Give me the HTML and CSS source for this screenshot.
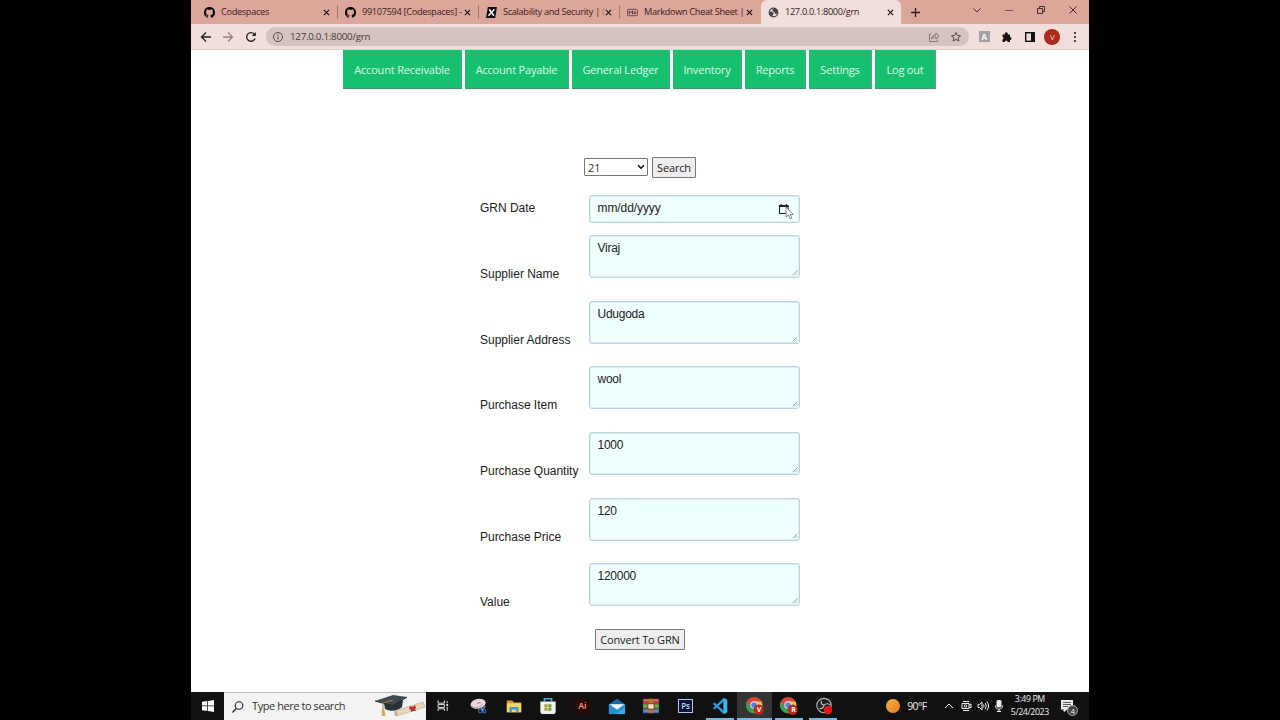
FILE: index.html
```html
<!DOCTYPE html>
<html lang="en">
<head>
<meta charset="utf-8">
<title>GRN</title>
<link rel="stylesheet" href="styles.css">
</head>
<body>
<svg class="defs" width="0" height="0">
  <symbol id="github" viewBox="0 0 16 16"><path d="M8 0a8 8 0 0 0-2.53 15.59c.4.07.55-.17.55-.38v-1.5c-2.23.48-2.7-.95-2.7-.95-.36-.93-.89-1.18-.89-1.18-.73-.5.05-.49.05-.49.8.06 1.23.83 1.23.83.72 1.22 1.87.87 2.33.66.07-.52.28-.87.51-1.07-1.78-.2-3.64-.89-3.64-3.95 0-.87.31-1.59.82-2.15-.08-.2-.36-1.02.08-2.12 0 0 .67-.21 2.2.82a7.6 7.6 0 0 1 4 0c1.53-1.04 2.2-.82 2.2-.82.44 1.1.16 1.92.08 2.12.51.56.82 1.27.82 2.15 0 3.07-1.87 3.75-3.65 3.95.29.25.54.73.54 1.48v2.2c0 .21.15.46.55.38A8 8 0 0 0 8 0z"/></symbol>
  <symbol id="x" viewBox="0 0 8 8"><path d="M1 1l6 6M7 1L1 7" fill="none" stroke="currentColor" stroke-width="1.3"/></symbol>
  <symbol id="chrome" viewBox="0 0 20 20"><circle cx="9" cy="9" r="9" fill="#d94436"/><path d="M1.2 4.5A9 9 0 0 0 9 18l4-6.8L5 11z" fill="#32a350"/><path d="M17.3 5H9l4 6.500L9 18A9 9 0 0 0 17.300 5z" fill="#f5c431"/><circle cx="9" cy="9" r="4.200" fill="#eef"/><circle cx="9" cy="9" r="3.200" fill="#4a86e8"/><circle cx="14" cy="14" r="5.700" fill="#b92a1c"/></symbol>
</svg>
<div class="desktop">
  <header class="tabs">
    <div class="tab"><svg class="fav"><use href="#github"/></svg><span class="title">Codespaces</span><svg class="close"><use href="#x"/></svg></div>
    <div class="tab"><svg class="fav"><use href="#github"/></svg><span class="title">99107594 [Codespaces] -</span><svg class="close"><use href="#x"/></svg></div>
    <div class="tab"><svg class="fav" viewBox="0 0 12 12"><path d="M2 0h10l-2 12H0z" fill="#111"/><path d="M3.500 2.500l5 7M9.200 2.500l-6.500 7" stroke="#fff" stroke-width="1.600"/></svg><span class="title">Scalability and Security | <i>(</i></span><svg class="close"><use href="#x"/></svg></div>
    <div class="tab last"><svg class="fav" viewBox="0 0 12 12"><rect x=".5" y="2.500" width="11" height="7" rx="1" fill="none" stroke="#634540"/><path d="M2.500 8V4.300L4.200 6 6 4.300V8M8.700 4v3.500M7.300 6.200l1.400 1.500 1.500-1.500" fill="none" stroke="#423"/></svg><span class="title">Markdown Cheat Sheet |</span><svg class="close"><use href="#x"/></svg></div>
    <div class="tab active"><svg class="fav globe" viewBox="0 0 12 12"><circle cx="6" cy="6" r="4.700" fill="#eddcd8" stroke="#444" stroke-width="1.300"/><path d="M1.500 5l3 .3 2 1.500-1 1.500-1 2.500-2.500-2zM5 1.500h3.500L10.500 4v3L8 7.500 7 5.500 5 4.500z" fill="#444"/></svg><span class="title">127.0.0.1:8000/grn</span><svg class="close"><use href="#x"/></svg></div>
    <svg class="plus" viewBox="0 0 10 10"><path d="M5 1v8M1 5h8"/></svg>
    <div class="winctl">
      <svg viewBox="0 0 10 10"><path d="M1.500 3.500L5 7l3.500-3.500"/></svg>
      <svg viewBox="0 0 10 10"><path d="M1 5.500h8" opacity=".7"/></svg>
      <svg viewBox="0 0 10 10"><path d="M1.500 3.500h5v5h-5zM3.500 3.500v-2h5v5h-2"/></svg>
      <svg viewBox="0 0 10 10"><path d="M1.500 1.500l7 7M8.500 1.500l-7 7"/></svg>
    </div>
  </header>
  <div class="toolbar">
    <div class="navbtns">
      <svg viewBox="0 0 12 12"><path d="M11 6H2M6 1.500L1.500 6 6 10.500"/></svg>
      <svg class="dim" viewBox="0 0 12 12"><path d="M1 6h9M6 1.500L10.500 6 6 10.500"/></svg>
      <svg viewBox="0 0 12 12"><path d="M10 7.500A4.300 4.300 0 1 1 9.300 3.200"/><path d="M10.800 1v4h-4z" fill="#222" stroke="none"/></svg>
    </div>
    <div class="url">
      <svg class="info" viewBox="0 0 12 12"><circle cx="6" cy="6" r="4.500"/><path d="M6 5.300v3M6 3.300v1.200"/></svg>
      <span class="address">127.0.0.1:8000/grn</span>
      <svg class="share" viewBox="0 0 12 12"><path d="M3 3H1.500v7.500h8V8.500M3.500 8c.3-3 2-4 4.500-4V2l3 3-3 3V6C6 6 4.500 6.500 3.500 8z"/></svg>
      <svg class="star" viewBox="0 0 12 12"><path d="M6 1.500l1.300 3 3.300.3-2.500 2.100.8 3.200L6 8.400l-2.900 1.700.8-3.200L1.400 4.800l3.300-.3z"/></svg>
    </div>
    <div class="exts">
      <span class="ext-a">A</span>
      <svg viewBox="0 0 12 12"><path d="M1.500 3.500h2.300a1.600 1.600 0 1 1 3 0H9v2.400a1.500 1.500 0 1 1 0 3V11H6.700a1.500 1.500 0 0 0-3 0H1.500V8.500a1.400 1.400 0 0 0 0-2.700z" fill="#161211" stroke="none"/></svg>
      <svg viewBox="0 0 12 12"><rect x="1.700" y="1.700" width="8.600" height="8.600" stroke-width="1.400"/><path d="M7 1.500h3.500v9H7z" fill="#111" stroke="none"/></svg>
      <span class="avatar">V</span>
      <svg viewBox="0 0 12 12"><g fill="#222" stroke="none"><circle cx="6" cy="2" r="1.100"/><circle cx="6" cy="6" r="1.100"/><circle cx="6" cy="10" r="1.100"/></g></svg>
    </div>
  </div>
  <main class="page">
    <nav class="menu">
      <a>Account Receivable</a><a>Account Payable</a><a>General Ledger</a><a>Inventory</a><a>Reports</a><a>Settings</a><a>Log out</a>
    </nav>
    <div class="lookup">
      <div class="select"><span>21</span><svg viewBox="0 0 8 6"><path d="M1 1.200l3 3 3-3"/></svg></div>
      <div class="button search-btn">Search</div>
    </div>
    <div class="form">
      <div class="row date-row"><label>GRN Date</label><div class="field date"><span>mm/dd/yyyy</span>
        <svg class="cal" viewBox="0 0 12 12"><path d="M1.500 2.500h8.500v8H1.500z" fill="none" stroke="#222" stroke-width="1.100"/><path d="M1 2h9.500v2H1zM2.500 1h1.200v2H2.500zM7.800 1H9v2H7.800z" fill="#222"/></svg>
        <svg class="cursor" viewBox="0 0 10 14"><path d="M1 1v10l2.400-2 1.700 3.800 1.700-.8-1.700-3.500h3.200z" fill="#fff" stroke="#777" stroke-width=".9"/></svg></div></div>
      <div class="row"><label>Supplier Name</label><div class="field area">Viraj<svg class="grip" viewBox="0 0 8 8"><path d="M1 7l6-6M4.500 7L7 4.500"/></svg></div></div>
      <div class="row"><label>Supplier Address</label><div class="field area">Udugoda<svg class="grip" viewBox="0 0 8 8"><path d="M1 7l6-6M4.500 7L7 4.500"/></svg></div></div>
      <div class="row"><label>Purchase Item</label><div class="field area">wool<svg class="grip" viewBox="0 0 8 8"><path d="M1 7l6-6M4.500 7L7 4.500"/></svg></div></div>
      <div class="row"><label>Purchase Quantity</label><div class="field area">1000<svg class="grip" viewBox="0 0 8 8"><path d="M1 7l6-6M4.500 7L7 4.500"/></svg></div></div>
      <div class="row"><label>Purchase Price</label><div class="field area">120<svg class="grip" viewBox="0 0 8 8"><path d="M1 7l6-6M4.500 7L7 4.500"/></svg></div></div>
      <div class="row"><label>Value</label><div class="field area">120000<svg class="grip" viewBox="0 0 8 8"><path d="M1 7l6-6M4.500 7L7 4.500"/></svg></div></div>
    </div>
    <div class="button convert">Convert To GRN</div>
  </main>
  <footer class="taskbar">
    <div class="start"><svg width="12" height="12" viewBox="0 0 12 12"><path d="M0 1.700L5.300 1v4.600H0zM6 .9L12 0v5.600H6zM0 6.300h5.300v4.600L0 10.200zM6 6.300h6V12l-6-.9z" fill="#fff"/></svg></div>
    <div class="search">
      <svg width="14" height="14" viewBox="0 0 14 14"><circle cx="8" cy="5.500" r="3.800" fill="none" stroke="#222" stroke-width="1.100"/><path d="M5.300 8.300L1.500 12.500" stroke="#222" stroke-width="1.200"/></svg>
      <span>Type here to search</span>
      <svg class="cap" width="52" height="25" viewBox="0 0 52 25"><path d="M10 9l1 6c6 3 13 2 17-2l1-7z" fill="#29313a"/><path d="M1 7L19 1l14 2-14 8z" fill="#414a53"/><path d="M1 7l18 5 14-9" fill="none" stroke="#222931"/><path d="M19 6L9 9v8" fill="none" stroke="#a68432"/><path d="M7.500 16h3l1 6H8z" fill="#d5ad48"/><path d="M21 17L49 8l2 5-29 9z" fill="#e5d8bd" stroke="#c0ab89" stroke-width=".7"/><ellipse cx="22" cy="19.500" rx="1.500" ry="2.500" fill="#c5ad87"/><path d="M36 12l3 1 2-2 1 3-1 1 1 2-3 0-2 1 0-2-2-1z" fill="#bb2f36"/></svg>
    </div>
    <div class="apps">
      <div class="app view"><svg viewBox="0 0 20 20"><path d="M3 2v4h9V2M3 17v-3h9v3M3 8h9v4H3zM16 3v3M16 11v6" fill="none" stroke="#e8e8e8" stroke-width="1.400"/><circle cx="16" cy="8.500" r="1.500" fill="#fff"/></svg></div>
      <div class="app"><svg viewBox="0 0 20 20"><ellipse cx="9" cy="7.500" rx="8.500" ry="5.500" fill="#ead8df" transform="rotate(-12 9 7.500)"/><path d="M2 10c3 3 8 2 12-2" fill="none" stroke="#b98f9e"/><path d="M8 7l4-1" stroke="#c06a75"/><path d="M11 10l4 6M17 10l-4 5" stroke="#9bb6d5" stroke-width="1.300"/><circle cx="11.500" cy="15.500" r="2" fill="none" stroke="#3970b4" stroke-width="1.300"/><circle cx="16" cy="16" r="1.700" fill="none" stroke="#3970b4" stroke-width="1.300"/></svg></div>
      <div class="app"><svg viewBox="0 0 20 20"><path d="M2 4h6l2 2h8v11H2z" fill="#d99b2e"/><path d="M2 7h16v10H2z" fill="#f6d36b"/><path d="M5 11h10v6h-2.500v-3h-5v3H5z" fill="#3f9bce"/></svg></div>
      <div class="app"><svg viewBox="0 0 20 20"><path d="M6 5V2h8v3" fill="none" stroke="#49a8d6" stroke-width="1.800"/><path d="M1.500 5h17v11q0 3-3 3H4.500q-3 0-3-3z" fill="#eef2ea"/><path d="M6 8h3.500v3.300H6zM6 12h3.500v3.300H6z" fill="#ad9c35"/><path d="M10.300 8h3.500v3.300h-3.500zM10.300 12h3.500v3.300h-3.500z" fill="#67a342"/></svg></div>
      <div class="app"><span class="ai">Ai</span></div>
      <div class="app"><svg viewBox="0 0 20 20"><path d="M1 8l9-6 9 6z" fill="#176da8"/><path d="M1 8h18v11H1z" fill="#38a9e4"/><path d="M2 8h16l-8 6z" fill="#f0f7fb"/><path d="M1 8l9 7 9-7v3L9 19H1z" fill="#2590d2"/></svg></div>
      <div class="app"><svg viewBox="0 0 20 20"><path d="M1 2h18v5H1z" fill="#b63c50"/><path d="M1 7h18v6H1z" fill="#4f9838"/><path d="M1 13h18v5H1z" fill="#3b6db3"/><path d="M2 3.500h16M2 15.500h16M2 10h16" stroke="#d4ad62" stroke-width="1"/><path d="M7.500 2h5v16h-5z" fill="#bd752e"/><path d="M6.500 7.500h7v6h-7z" fill="#f2e3be" stroke="#752c24"/></svg></div>
      <div class="app"><span class="ps">Ps</span></div>
      <div class="app open vs"><svg viewBox="0 0 20 20"><path d="M14 1l4 2v14l-4 2L2 7.500 4 6l10 9V5L4 14l-2-1.500z" fill="#2b9bdc"/><path d="M14 1l4 2v14l-4 2z" fill="#46b4ec"/></svg></div>
      <div class="app open current"><svg viewBox="0 0 20 20"><use href="#chrome"/></svg><b>V</b></div>
      <div class="app open"><svg viewBox="0 0 20 20"><use href="#chrome"/></svg><b>R</b></div>
      <div class="app open"><svg viewBox="0 0 20 20"><circle cx="10" cy="9.500" r="8" fill="#1d1d1f" stroke="#bbb" stroke-width="1.200"/><path d="M10 9q-4-1-3-5M10 9q4-3 7 0M10 9q0 4-5 4" fill="none" stroke="#bbb" stroke-width="1.300"/><circle cx="14.500" cy="14.500" r="4.700" fill="#e9131b"/></svg></div>
    </div>
    <div class="tray">
      <span class="sun"></span><span class="temp">90°F</span>
      <svg class="up" viewBox="0 0 10 10"><path d="M1 7l4-4 4 4"/></svg>
      <svg class="cam" viewBox="0 0 12 12"><path d="M3 1.500h6M3 10.500h6M2 3.500h7v5H2zM9 5l2-1v4L9 7"/><circle cx="5.500" cy="6" r="1.300"/></svg>
      <svg class="vol" viewBox="0 0 12 12"><path d="M1 4.500h1.500L5 2v8L2.500 7.500H1zM6.500 4.500q1.200 1.500 0 3M8.200 3q2.300 3 0 6M10 1.700q3.200 4.300 0 8.600"/></svg>
      <svg class="mic" viewBox="0 0 12 12"><rect x="3.500" y="0" width="5" height="7.500" rx="1.500" fill="#eee" stroke="none"/><path d="M2.500 5.500c0 5 7 5 7 0M6 9v2.500M4 11.500h4"/></svg>
      <div class="clock"><span>3:49 PM</span><span>5/24/2023</span></div>
      <div class="note"><svg viewBox="0 0 12 12"><path d="M0 0h12v9H6l-3 2.500V9H0z" fill="#eee"/><path d="M2 2.500h8M2 4.500h8M2 6.500h5" stroke="#333" stroke-width=".8"/></svg><span>4</span></div>
    </div>
  </footer>
</div>
</body>
</html>
```
FILE: styles.css
```css
* { box-sizing: border-box; }
body { margin: 0; background: #000; font-family: "Open Sans", "Noto Sans", sans-serif; overflow: hidden; }
svg { display: block; flex: none; }
.defs { position: absolute; }
.desktop { width: 898px; height: 720px; margin-left: 191px; display: flex; flex-direction: column; background: #fff; }

.tabs { height: 24px; background: #dda69b; display: flex; padding-left: 6px; color: #38201e; }
.tab { width: 141px; height: 24px; display: flex; align-items: center; padding: 0 8px 0 7px; background: linear-gradient(#a97970, #a97970) right 5px / 1px 14px no-repeat; }
.tab.last { background: none; }
.tab.active { width: 140px; padding-right: 7px; background: #f2deda; border-radius: 6px 6px 0 0; }
.fav { width: 11px; height: 11px; margin-right: 6px; }
.title { flex: 1; font-size: 9.200px; letter-spacing: -.32px; white-space: nowrap; line-height: 14px; }
.title i { font-style: normal; opacity: .35; }
.close { width: 7px; height: 7px; color: #201010; }
.plus { width: 11px; height: 11px; margin: 7px 0 0 9px; stroke: #2a1816; stroke-width: 1.2; }
.winctl { display: flex; margin-left: auto; padding: 5px 11px 0 0; gap: 22px; }
.winctl svg { width: 10px; height: 10px; fill: none; stroke: #4a2a28; stroke-width: 1; }

.toolbar { height: 26px; background: #f2deda; display: flex; align-items: center; padding-left: 4px; border-bottom: 1px solid #dccfcb; }
.navbtns { display: flex; gap: 10.500px; padding-left: 4.500px; width: 71px; }
.navbtns svg { width: 12px; height: 12px; fill: none; stroke: #222; stroke-width: 1.300; }
.navbtns .dim { stroke: #96817e; }
.url { width: 703px; height: 19px; border-radius: 10px; background: #d5c3bf; display: flex; align-items: center; padding: 0 7px 0 6px; }
.url svg { width: 12px; height: 12px; fill: none; stroke: #554947; stroke-width: 1; }
.url .share { stroke: #857773; }
.address { flex: 1; margin-left: 6px; font-size: 9.800px; letter-spacing: -.28px; color: #423a39; }
.url .star { margin-left: 10px; }
.exts { display: grid; grid-template-columns: repeat(5, 22.700px); place-items: center; padding-left: 4px; }
.exts svg { width: 12px; height: 12px; fill: none; stroke: #111; }
.ext-a { width: 11px; height: 11px; background: #a5a0a1; color: #fff; font: bold 8px/11px "Open Sans", sans-serif; text-align: center; }
.avatar { width: 16px; height: 16px; border-radius: 50%; background: #ad2a1c; color: #f5dcd8; font-size: 8px; line-height: 16px; text-align: center; }

.page { height: 642px; display: flex; flex-direction: column; align-items: center; }
.menu { display: grid; grid-template-columns: 119px 104px 98px 69px 61px 63px 61px; gap: 3px; height: 39px; margin-right: 1px; }
.menu a { height: 39px; background: #16c06e; border-right: 1px solid #56a87c; border-bottom: 1px solid #3a9a69; color: #dcfbe9; font-size: 11px; letter-spacing: -.18px; line-height: 40px; text-align: center; white-space: nowrap; }
.lookup { display: flex; align-items: center; gap: 4px; margin-top: 68px; height: 21px; }
.select { width: 64px; height: 18px; margin-top: -1px; border: 1px solid #777; border-radius: 1px; display: flex; align-items: center; justify-content: space-between; padding: 0 2px 0 3px; font-size: 11px; color: #333; }
.select svg { width: 8px; height: 6px; fill: none; stroke: #111; stroke-width: 1.500; }
.button { height: 21px; border: 1px solid #777; border-radius: 1px; background: #efefef; color: #222; font-size: 11px; letter-spacing: -.18px; line-height: 20px; text-align: center; white-space: nowrap; }
.search-btn { width: 44px; }
.form { width: 320px; margin-top: 17px; font-family: "Liberation Sans", Arial, sans-serif; font-size: 12px; letter-spacing: -.08px; color: #222; }
.row { height: 65.700px; display: grid; grid-template-columns: 109px 211px; align-items: start; }
.row label { padding-top: 32px; line-height: 14px; white-space: nowrap; letter-spacing: -.02px; }
.date-row { height: 40px; }
.date-row label { padding-top: 6px; }
.field { position: relative; border: 1px solid #b9d5e2; border-radius: 3px; background: #f0ffff; padding: 0 7.500px; box-shadow: inset 0 0 0 .5px #cbe0e8; letter-spacing: -.25px; }
.area { height: 43px; padding-top: 5px; line-height: 14px; }
.date { height: 28px; line-height: 25px; letter-spacing: -.08px; }
.cal { position: absolute; right: 9px; top: 7px; width: 12px; height: 12px; }
.cursor { position: absolute; right: 4px; top: 10px; width: 10px; height: 14px; }
.grip { position: absolute; right: 1px; bottom: 1px; width: 6px; height: 6px; stroke: #718087; stroke-width: 1; }
.convert { width: 90px; }

.taskbar { height: 28px; background: #111112; display: flex; color: #eee; }
.start { width: 33px; display: grid; place-items: center; }
.search { width: 202px; background: #f3f3f3; border-top: 1px solid #bbb; display: flex; align-items: center; padding-left: 7px; color: #333; font-size: 11px; letter-spacing: -.43px; }
.search span { margin: -2px 0 0 7px; white-space: nowrap; }
.cap { margin-left: auto; }
.apps { display: grid; grid-template-columns: 36px repeat(11, 34.400px); }
.app { height: 28px; display: flex; align-items: center; justify-content: center; position: relative; }
.app svg { width: 18px; height: 18px; }
.view { padding-right: 2px; }
.view svg { width: 14px; height: 14px; }
.app.open::after { content: ""; position: absolute; left: 3px; right: 3px; bottom: 0; height: 2px; background: #75b7e5; }
.app.current { background: #343436; }
.app.current::after { left: 0; right: 0; }
.app.open svg { margin-left: 1px; }
.app b { position: absolute; left: 17px; top: 13px; width: 10px; font-size: 7px; line-height: 10px; text-align: center; color: #fff; }
.ai { width: 15px; height: 14px; background: #2b0504; color: #f0a08a; font-size: 9px; font-weight: 600; line-height: 13px; text-align: center; }
.ps { width: 15px; height: 14px; background: #0b1439; border: 1px solid #b7c4ee; color: #c2d0f5; font-size: 8px; font-weight: 600; line-height: 12px; text-align: center; }
.tray { flex: 1; display: flex; align-items: center; padding-left: 46px; }
.tray svg { width: 12px; height: 12px; fill: none; stroke: #eee; stroke-width: 1; }
.sun { width: 14px; height: 14px; border-radius: 50%; background: linear-gradient(135deg, #f7b34a, #e77b18); }
.temp { width: 37px; margin-left: 7px; font-size: 10.500px; letter-spacing: -.7px; }
.tray .up { width: 10px; }
.tray .cam { margin-left: 6px; }
.tray .vol { margin-left: 5px; }
.tray .mic { margin-left: 4px; }
.clock { width: 47px; margin: -1px 0 0 1px; display: flex; flex-direction: column; align-items: center; font-size: 8.800px; letter-spacing: -.4px; line-height: 12.500px; white-space: nowrap; }
.note { position: relative; margin-left: 8px; }
.note span { position: absolute; left: 6px; top: 5px; width: 11px; height: 11px; border-radius: 50%; background: #444; border: 1px solid #aaa; font-size: 8px; line-height: 9px; text-align: center; }
```
